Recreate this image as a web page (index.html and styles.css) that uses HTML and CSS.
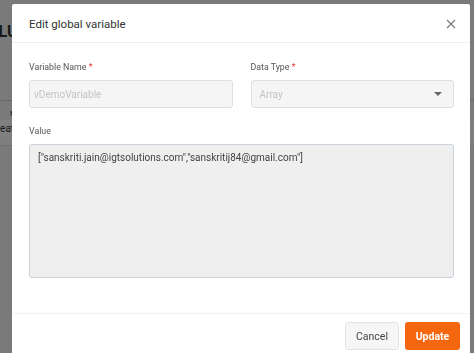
FILE: index.html
```html
<!DOCTYPE html>
<html lang="en">
  <head>
    <meta charset="UTF-8" />
    <meta name="viewport" content="width=device-width, initial-scale=1.0" />
    <title>Edit global variable</title>
    <link rel="stylesheet" href="styles.css">
  </head>
  <body>
    <div class="page">
      <div class="page-title">VALUES</div>
      <div class="page-table">
        <div class="page-row head">Name</div>
        <div class="page-row">Repeat</div>
      </div>
    </div>

    <div class="overlay">
      <div class="modal">
        <div class="modal-header">
          <h3>Edit global variable</h3>
          <span class="modal-close">
            <svg width="10" height="10" viewBox="0 0 10 10">
              <path d="M1 1 L9 9 M9 1 L1 9" stroke="#777" stroke-width="1.1" fill="none" />
            </svg>
          </span>
        </div>

        <div class="modal-body">
          <div class="field-row">
            <div class="field">
              <label>Variable Name <span class="req">*</span></label>
              <input type="text" class="text-input" placeholder="vDemoVariable" disabled />
            </div>
            <div class="field">
              <label>Data Type <span class="req">*</span></label>
              <div class="select-input">
                <span>Array</span>
                <span class="caret"></span>
              </div>
            </div>
          </div>

          <div class="field">
            <label>Value</label>
            <div class="value-box">["sanskriti.jain@igtsolutions.com","sanskritij84@gmail.com"]</div>
          </div>
        </div>

        <div class="modal-footer">
          <button class="btn btn-cancel">Cancel</button>
          <button class="btn btn-update">Update</button>
        </div>
      </div>
    </div>
  </body>
</html>
```

FILE: styles.css
```css
body {
  font-family: Roboto, "Liberation Sans", Arial, sans-serif;
  margin: 0;
  padding: 0;
  width: 474px;
  height: 353px;
  overflow: hidden;
  background-color: #f4f4f4;
  color: #333;
}

/* page behind the dialog */
.page {
  padding-top: 22px;
}

.page-title {
  font-size: 16px;
  font-weight: 700;
  line-height: 19px;
  color: #333;
  margin-left: -22px;
  height: 78px;
}

.page-table {
  border-top: 1px solid #ccc;
}

.page-row {
  font-size: 10px;
  height: 25px;
  line-height: 17px;
  border-bottom: 1px solid #ddd;
  margin-left: -17px;
  background: #fff;
}

.page-row.head {
  font-size: 8px;
  height: 19px;
  line-height: 25px;
  margin-left: 10px;
  background: transparent;
  border-bottom: none;
}

.overlay {
  position: fixed;
  top: 0;
  left: 0;
  right: 0;
  bottom: 0;
  background: rgba(0, 0, 0, 0.5);
}

.modal {
  position: absolute;
  top: 4px;
  left: 12px;
  width: 458px;
  height: 380px;
  background: white;
  border-radius: 2px;
  display: flex;
  flex-direction: column;
}

.modal-header {
  display: flex;
  align-items: center;
  justify-content: space-between;
  height: 38px;
  padding: 0 17px;
  border-bottom: 1px solid #f0f0f0;
}

.modal-header h3 {
  margin: 1px 0 0;
  font-size: 11.5px;
  font-weight: 400;
  color: #333;
}

.modal-close {
  display: flex;
  margin: 2px -3px 0 0;
}

.modal-body {
  padding: 18px 16px 0 17px;
  height: 252px;
  border-bottom: 1px solid #f2f2f2;
}

.field-row {
  display: flex;
  gap: 18px;
  margin-bottom: 17px;
}

.field-row .field {
  flex: 1;
}

.field label {
  display: block;
  font-size: 8.8px;
  color: #555;
  margin-bottom: 7px;
  height: 12px;
  line-height: 12px;
}

.req {
  color: #e53935;
}

.text-input {
  box-sizing: border-box;
  width: 100%;
  height: 28px;
  padding: 0 4px;
  border: 1px solid #e0e0e0;
  border-radius: 3px;
  background: #f5f5f5;
  font-family: inherit;
  font-size: 10px;
}

.text-input::placeholder {
  color: #c4c4c4;
}

.select-input {
  box-sizing: border-box;
  height: 28px;
  padding: 0 8px;
  border: 1px solid #e0e0e0;
  border-radius: 3px;
  background: #f5f5f5;
  display: flex;
  align-items: center;
  justify-content: space-between;
  font-size: 10px;
  color: #c4c4c4;
}

.caret {
  width: 0;
  height: 0;
  border-left: 4px solid transparent;
  border-right: 4px solid transparent;
  border-top: 4px solid #666;
  margin-right: 3px;
}

.value-box {
  box-sizing: border-box;
  height: 134px;
  padding: 7px 8px;
  border: 1px solid #c9d1da;
  border-radius: 3px;
  background: #efefef;
  font-size: 10px;
  color: #444;
}

.modal-footer {
  display: flex;
  justify-content: flex-end;
  gap: 6px;
  padding: 8px 10px 0 0;
}

.btn {
  height: 28px;
  border-radius: 3px;
  font-family: inherit;
  font-size: 10.5px;
  cursor: pointer;
}

.btn-cancel {
  width: 54px;
  background: #f6f6f6;
  border: 1px solid #e2e2e2;
  color: #444;
}

.btn-update {
  width: 55px;
  background: #f5670f;
  border: none;
  color: white;
  font-weight: 700;
}
```
